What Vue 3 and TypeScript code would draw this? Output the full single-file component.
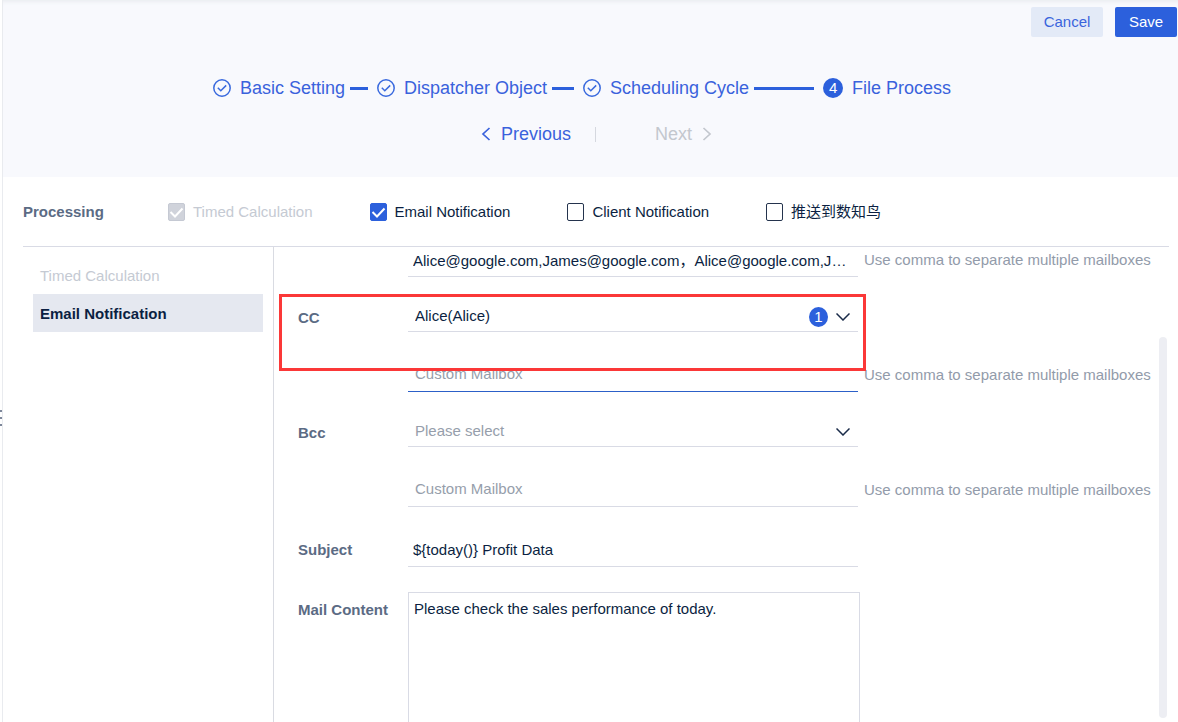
<script setup lang="ts">
import { ref } from 'vue'

interface Step {
  title: string
  number: number
  done: boolean
  connector: number
}

interface Task {
  id: string
  label: string
  checked: boolean
  disabled: boolean
}

const steps: Step[] = [
  { title: 'Basic Setting', number: 1, done: true, connector: 18 },
  { title: 'Dispatcher Object', number: 2, done: true, connector: 22 },
  { title: 'Scheduling Cycle', number: 3, done: true, connector: 60 },
  { title: 'File Process', number: 4, done: false, connector: 0 },
]

const tasks = ref<Task[]>([
  { id: 'timed', label: 'Timed Calculation', checked: true, disabled: true },
  { id: 'email', label: 'Email Notification', checked: true, disabled: false },
  { id: 'client', label: 'Client Notification', checked: false, disabled: false },
  { id: 'push', label: '推送到数知鸟', checked: false, disabled: false },
])

const recipients = ref('Alice@google.com,James@google.com，Alice@google.com,James@google.com')
const cc = ref('alice')
const ccMailbox = ref('')
const bcc = ref('')
const bccMailbox = ref('')
const subject = ref('${today()} Profit Data')
const content = ref('Please check the sales performance of today.')
const hint = 'Use comma to separate multiple mailboxes'
</script>

<template>
  <div class="page">
    <div class="splitter" aria-hidden="true"><i></i><i></i><i></i></div>
    <div class="main">
      <header class="header">
        <div class="actions">
          <button type="button" class="btn">Cancel</button>
          <button type="button" class="btn primary">Save</button>
        </div>
        <ol class="steps">
          <li v-for="step in steps" :key="step.number" class="step">
            <svg v-if="step.done" class="done" viewBox="0 0 18 18" aria-hidden="true">
              <circle cx="9" cy="9" r="8.2" />
              <path d="M4.8 8.8l3 3 5.4-5.4" />
            </svg>
            <span v-else class="number">{{ step.number }}</span>
            <span class="title">{{ step.title }}</span>
            <span v-if="step.connector" class="connector" :style="{ width: step.connector + 'px' }"></span>
          </li>
        </ol>
        <nav class="pager">
          <button type="button" class="page-btn">
            <svg viewBox="0 0 10 14" aria-hidden="true"><path d="M8.500 1L2 7l6.500 6" /></svg>
            Previous
          </button>
          <span class="bar"></span>
          <button type="button" class="page-btn" disabled>
            Next
            <svg viewBox="0 0 10 14" aria-hidden="true"><path d="M1.500 1L8 7l-6.500 6" /></svg>
          </button>
        </nav>
      </header>

      <div class="processing">
        <span class="processing-label">Processing</span>
        <div class="tasks">
          <label v-for="task in tasks" :key="task.id" class="task" :class="{ disabled: task.disabled }">
            <span class="box">
              <input v-model="task.checked" type="checkbox" :disabled="task.disabled" />
              <svg v-if="task.checked" viewBox="0 0 17 18" aria-hidden="true"><path d="M2.500 9l4.500 4.500 7.500-8" /></svg>
            </span>
            {{ task.label }}
          </label>
        </div>
      </div>

      <div class="body">
        <nav class="side">
          <button type="button" class="side-item" disabled>Timed Calculation</button>
          <button type="button" class="side-item active">Email Notification</button>
        </nav>

        <form class="form" @submit.prevent>
          <div class="row">
            <span></span>
            <input v-model="recipients" class="control" type="text" aria-label="Recipient mailboxes" />
            <span class="hint">{{ hint }}</span>
          </div>

          <div class="row">
            <label class="label" for="cc">CC</label>
            <div class="picker">
              <select id="cc" v-model="cc" class="control">
                <option value="alice">Alice(Alice)</option>
                <option value="james">James(James)</option>
              </select>
              <span class="overlay">
                <span class="count">1</span>
                <svg viewBox="0 0 14 8" aria-hidden="true"><path d="M.5.5L7 7 13.500.5" /></svg>
              </span>
            </div>
            <div class="highlight" aria-hidden="true"></div>
          </div>

          <div class="row spaced">
            <span></span>
            <input v-model="ccMailbox" class="control mailbox focused" type="text" placeholder="Custom Mailbox" aria-label="CC custom mailbox" />
            <span class="hint">{{ hint }}</span>
          </div>

          <div class="row">
            <label class="label" for="bcc">Bcc</label>
            <div class="picker">
              <select id="bcc" v-model="bcc" class="control empty">
                <option value="">Please select</option>
                <option value="alice">Alice(Alice)</option>
              </select>
              <span class="overlay">
                <svg viewBox="0 0 14 8" aria-hidden="true"><path d="M.5.5L7 7 13.500.5" /></svg>
              </span>
            </div>
          </div>

          <div class="row spaced">
            <span></span>
            <input v-model="bccMailbox" class="control mailbox" type="text" placeholder="Custom Mailbox" aria-label="Bcc custom mailbox" />
            <span class="hint">{{ hint }}</span>
          </div>

          <div class="row spaced">
            <label class="label text-label" for="subject">Subject</label>
            <input id="subject" v-model="subject" class="control" type="text" />
          </div>

          <div class="row">
            <label class="label area-label" for="content">Mail Content</label>
            <textarea id="content" v-model="content" class="content"></textarea>
          </div>
        </form>
        <div class="scroll-thumb" aria-hidden="true"></div>
      </div>
    </div>
  </div>
</template>

<style>
body {
  margin: 0;
  background: #fff;
}
</style>

<style scoped>
.page,
.page * {
  box-sizing: border-box;
}

.page {
  display: flex;
  height: 100vh;
  overflow: hidden;
  font: 15px/20px "Liberation Sans", "Noto Sans CJK SC", sans-serif;
  color: #0b1f42;
}

button,
input,
select,
textarea {
  margin: 0;
  font: inherit;
  color: inherit;
}

button {
  border: 0;
  background: none;
}

.splitter {
  display: flex;
  flex: none;
  flex-direction: column;
  justify-content: center;
  gap: 5px;
  width: 3px;
  padding-top: 114px;
  border-right: 1px solid #e9ebef;
}

.splitter i {
  width: 2px;
  height: 2px;
  background: #7d879a;
}

.main {
  display: flex;
  flex: 1;
  flex-direction: column;
  min-width: 0;
}

.header {
  flex: none;
  height: 177px;
  padding: 7px 1px 0 0;
  background: #f8f9fd;
  box-shadow: inset 0 5px 5px -4px #e6e8ec;
}

.actions {
  display: flex;
  justify-content: flex-end;
  gap: 12px;
}

.btn {
  width: 72px;
  height: 30px;
  padding: 0;
  border-radius: 2px;
  background: #e3eaf7;
  color: #3a64dc;
}

.btn.primary {
  width: 62px;
  background: #2c60dc;
  color: #fff;
}

.steps {
  display: flex;
  justify-content: center;
  margin: 39px 16px 0 0;
  padding: 0;
  list-style: none;
}

.step {
  display: flex;
  align-items: center;
  height: 24px;
  font-size: 18px;
  line-height: 24px;
  color: #3a62dc;
  white-space: nowrap;
}

.done {
  width: 18px;
  height: 18px;
  fill: none;
  stroke: #3a6ade;
  stroke-width: 1.5;
}

.number {
  width: 20px;
  height: 20px;
  border-radius: 50%;
  background: #2c60dc;
  color: #fff;
  font-size: 15px;
  line-height: 20px;
  text-align: center;
}

.title {
  margin-left: 9px;
}

.connector {
  height: 3px;
  margin: 0 9px 0 5px;
  background: #2c60dc;
}

.pager {
  display: flex;
  align-items: center;
  justify-content: center;
  height: 24px;
  margin: 22px 0 0;
  padding-left: 13px;
}

.page-btn {
  display: flex;
  align-items: center;
  gap: 10px;
  padding: 0;
  font-size: 18px;
  line-height: 24px;
  color: #3a62dc;
}

.page-btn svg {
  width: 10px;
  height: 14px;
  fill: none;
  stroke: currentColor;
  stroke-width: 1.7;
}

.page-btn:disabled {
  color: #c3c7ce;
}

.bar {
  width: 1px;
  height: 15px;
  margin: 0 59px 0 24px;
  background: #d5d8df;
}

.processing {
  display: flex;
  flex: none;
  align-items: center;
  height: 70px;
  margin: 0 9px 0 20px;
  border-bottom: 1px solid #d9dbe5;
}

.processing-label {
  width: 145px;
  font-weight: bold;
  color: #5b6b84;
}

.tasks {
  display: flex;
  gap: 57px;
}

.task {
  display: flex;
  align-items: center;
  gap: 8px;
  white-space: nowrap;
}

.task.disabled {
  color: #c5cad3;
}

.box {
  position: relative;
  width: 17px;
  height: 18px;
}

.box input {
  display: block;
  width: 17px;
  height: 18px;
  appearance: none;
  border: 1px solid #24334d;
  border-radius: 2px;
  background: #fff;
}

.box input:checked {
  border-color: #2c60dc;
  background: #2c60dc;
}

.box input:disabled {
  border-color: #c5c9d3;
  background: #d0d3db;
}

.box svg {
  position: absolute;
  inset: 0;
  fill: none;
  stroke: #fff;
  stroke-width: 2;
  pointer-events: none;
}

.body {
  display: flex;
  flex: 1;
  min-height: 0;
  padding: 0 11px 0 20px;
  overflow: hidden;
}

.side {
  flex: none;
  width: 251px;
  padding: 9px 10px 0;
  border-right: 1px solid #d9dbe2;
}

.side-item {
  display: block;
  width: 100%;
  height: 38px;
  padding: 2px 7px 0;
  text-align: left;
}

.side-item:disabled {
  color: #c5cad3;
}

.side-item.active {
  background: #e5e8f0;
  font-weight: bold;
}

.form {
  display: flex;
  flex: 1;
  flex-direction: column;
  gap: 25px;
  min-width: 0;
  padding-left: 24px;
}

.row {
  position: relative;
  display: grid;
  flex: none;
  grid-template-columns: 110px minmax(0, 450px) 1fr;
  align-items: start;
}

.spaced {
  margin-top: 5px;
}

.label {
  padding-top: 6px;
  font-weight: bold;
  color: #5b6b84;
}

.text-label {
  padding-top: 3px;
}

.area-label {
  padding-top: 8px;
}

.control {
  display: block;
  width: 100%;
  height: 30px;
  padding: 0 5px 5px;
  border: 0;
  border-bottom: 1px solid #d9dbe5;
  border-radius: 0;
  outline: 0;
  background: transparent;
  text-overflow: ellipsis;
}

select.control {
  padding: 0 50px 1px 7px;
  appearance: none;
}

.control.mailbox {
  padding: 0 7px 7px;
}

.control.empty,
.control::placeholder {
  color: #969eab;
  opacity: 1;
}

.control.focused {
  border-bottom-color: #2c60c8;
}

.picker {
  position: relative;
}

.overlay {
  position: absolute;
  top: 0;
  right: 8px;
  display: flex;
  align-items: center;
  gap: 8px;
  height: 30px;
  pointer-events: none;
}

.overlay svg {
  width: 14px;
  height: 8px;
  fill: none;
  stroke: #1a2b49;
  stroke-width: 1.5;
}

.count {
  width: 19px;
  height: 20px;
  border-radius: 50%;
  background: #2c60dc;
  color: #fff;
  text-align: center;
}

.hint {
  padding: 3px 0 0 6px;
  color: #929baa;
  white-space: nowrap;
}

.highlight {
  position: absolute;
  z-index: 1;
  top: -8px;
  left: -19px;
  width: 587px;
  height: 77px;
  border: 3px solid #fb3838;
  pointer-events: none;
}

.content {
  width: calc(100% + 2px);
  height: 200px;
  padding: 6px 5px;
  border: 1px solid #d9dbe5;
  border-radius: 0;
  outline: 0;
  background: #fff;
  resize: none;
}

.scroll-thumb {
  flex: none;
  width: 8px;
  margin: 90px 0 4px;
  border-radius: 4px;
  background: #edeef3;
}
</style>
